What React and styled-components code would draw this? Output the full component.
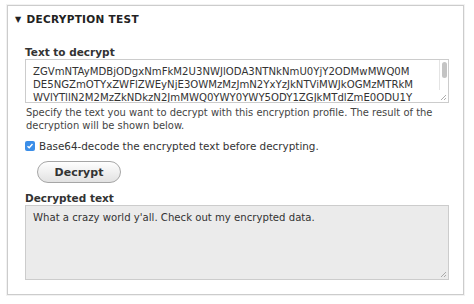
import React from "react";
import styled, { createGlobalStyle } from "styled-components";

const GlobalStyle = createGlobalStyle`
	html, body {
		margin: 0;
		padding: 0;
		background: #fff;
	}
	body {
		font-family: "DejaVu Sans", "Liberation Sans", sans-serif;
		color: #333;
	}
`;

const Page = styled.div`
	padding: 5px 10px 8px 7px;
`;

const Fieldset = styled.div`
	border: 1px solid #ccc;
	box-shadow: 0 0 0 1px #f2f2f2;
	height: 290px;
	box-sizing: border-box;
	padding: 6px 14px 0 17px;
`;

const Legend = styled.div`
	display: flex;
	align-items: center;
	gap: 5px;
	margin-left: -10px;
	font-size: 10.5px;
	font-weight: bold;
	letter-spacing: 0.3px;
	color: #222;
	height: 14px;
`;

const Arrow = styled.span`
	font-size: 8px;
`;

const Label = styled.div`
	font-size: 10.5px;
	font-weight: bold;
	color: #333;
	line-height: 13px;
	margin-top: ${(p) => p.$top}px;
`;

const Area = styled.div`
	position: relative;
	height: ${(p) => p.$height}px;
	border: 1px solid #ccc;
	background: ${(p) => (p.$disabled ? "#ebebeb" : "#fff")};
	padding: 5px 22px 0 7px;
	box-sizing: border-box;
	font-size: 10.15px;
	line-height: 13px;
	color: #333;
	overflow: hidden;
	white-space: pre;
`;

const Track = styled.div`
	position: absolute;
	right: 0;
	top: 0;
	bottom: 12px;
	width: 8px;
	border-left: 1px solid #e4e4e4;
	display: flex;
	justify-content: center;
	padding-top: 2px;
`;

const Thumb = styled.div`
	width: 5px;
	height: 16px;
	border-radius: 3px;
	background: #c4c4c4;
`;

const Grip = styled.svg`
	position: absolute;
	right: 2px;
	bottom: 2px;
`;

const Help = styled.p`
	margin: 3px 0 0 1px;
	font-size: 9.95px;
	line-height: 13px;
	color: #444;
`;

const Check = styled.label`
	display: flex;
	align-items: center;
	gap: 4px;
	margin-top: 8px;
	font-size: 10.4px;
	color: #333;
`;

const Box = styled.span`
	width: 10px;
	height: 10px;
	border-radius: 2px;
	background: #3b8ee8;
	display: flex;
	align-items: center;
	justify-content: center;
`;

const Button = styled.button`
	display: block;
	margin: 9px 0 0 12px;
	width: 84px;
	height: 22px;
	border: 1px solid #a6a6a6;
	border-radius: 11px;
	background: linear-gradient(#fefefe, #e2e2e2);
	font-family: inherit;
	font-size: 11px;
	font-weight: bold;
	color: #333;
	padding: 0;
`;

const resizeGrip = (
	<Grip width="6" height="6" viewBox="0 0 6 6">
		<path d="M1 6L6 1M4 6L6 4" stroke="#999" strokeWidth="0.8" />
	</Grip>
);

export default function App() {
	return (
		<>
			<GlobalStyle />
			<Page>
				<Fieldset>
					<Legend>
						<Arrow>▼</Arrow>
						DECRYPTION TEST
					</Legend>
					<Label $top={20}>Text to decrypt</Label>
					<Area $height={44}>
						{"ZGVmNTAyMDBjODgxNmFkM2U3NWJlODA3NTNkNmU0YjY2ODMwMWQ0M\nDE5NGZmOTYxZWFlZWEyNjE3OWMzMzJmN2YxYzJkNTViMWJkOGMzMTRkM\nWVlYTllN2M2MzZkNDkzN2JmMWQ0YWY0YWY5ODY1ZGJkMTdlZmE0ODU1Y"}
						<Track>
							<Thumb />
						</Track>
						{resizeGrip}
					</Area>
					<Help>
						Specify the text you want to decrypt with this encryption profile. The result of the
						decryption will be shown below.
					</Help>
					<Check>
						<Box>
							<svg width="8" height="8" viewBox="0 0 8 8">
								<path d="M1.5 4.2L3.2 5.8L6.5 2" stroke="#fff" strokeWidth="1.4" fill="none" />
							</svg>
						</Box>
						Base64-decode the encrypted text before decrypting.
					</Check>
					<Button>Decrypt</Button>
					<Label $top={9}>Decrypted text</Label>
					<Area $height={75} $disabled>
						What a crazy world y'all. Check out my encrypted data.
						{resizeGrip}
					</Area>
				</Fieldset>
			</Page>
		</>
	);
}
